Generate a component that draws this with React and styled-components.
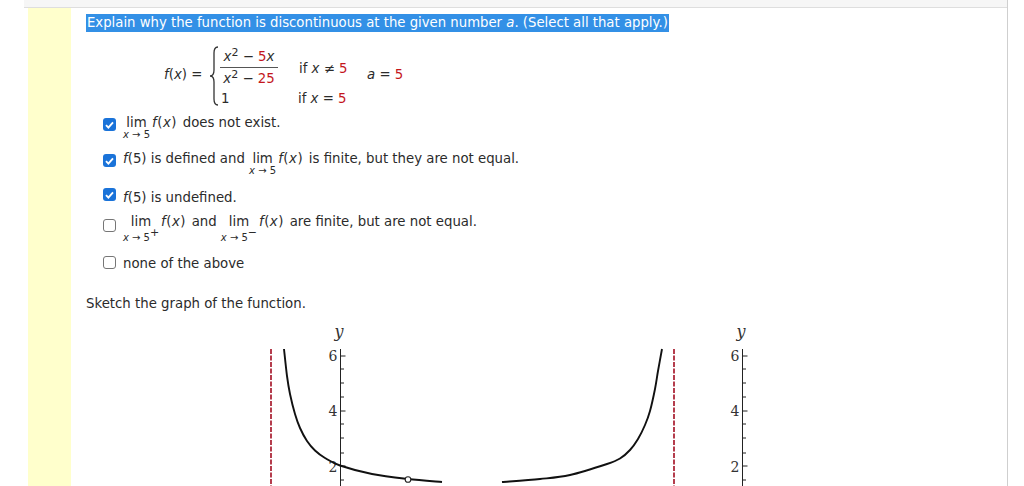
import React from 'react';
import styled, { createGlobalStyle } from 'styled-components';

const GlobalStyle = createGlobalStyle`
  html, body {
    margin: 0;
    height: 486px;
    overflow: hidden;
    background: #fff;
    font-family: "DejaVu Sans", Verdana, sans-serif;
    font-size: 13.3px;
    color: #2b2b2b;
  }
`;

const Page = styled.div`
  width: 983px;
  height: 486px;
  margin-left: 24px;
  display: flex;
  flex-direction: column;
  overflow: hidden;
  border-right: 1px solid #cfcfcf;
`;

const TopBar = styled.div`
  height: 7px;
  flex: none;
  background: #f6f6f6;
  border-bottom: 1px solid #dedede;
`;

const Body = styled.div`
  flex: 1;
  display: flex;
  padding-left: 4px;
  min-height: 0;
`;

const Sidebar = styled.div`
  width: 43px;
  flex: none;
  background: #ffffcc;
`;

const Content = styled.div`
  flex: 1;
  padding: 6px 0 0 15px;
  min-width: 0;
`;

const Highlight = styled.span`
  display: inline-block;
  height: 18px;
  line-height: 18px;
  padding: 0 1px;
  background: #3390e6;
  color: #fff;
  font-size: 13.26px;
  white-space: nowrap;
`;

const Em = styled.i`
  font-style: italic;
`;

const Red = styled.span`
  color: #c4161c;
`;

const MathRow = styled.div`
  display: flex;
  align-items: center;
  height: 60px;
  margin: 14px 0 0 78px;
`;

const Lhs = styled.span`
  width: 44px;
  flex: none;
  padding-bottom: 4px;
  white-space: nowrap;
`;

const Piecewise = styled.div`
  display: grid;
  grid-template-columns: 58px 89px;
  grid-template-rows: 45px 15px;
`;

const Fraction = styled.div`
  display: flex;
  flex-direction: column;
  align-items: center;
  justify-content: center;
`;

const FractionPart = styled.span`
  line-height: 22px;
  white-space: nowrap;
  &:first-child {
    line-height: 20px;
    border-bottom: 1px solid #555;
    width: 100%;
    text-align: center;
  }
`;

const Sup = styled.sup`
  font-size: 11px;
  line-height: 0;
  vertical-align: 5px;
`;

const Condition = styled.span`
  padding-left: ${(p) => p.$indent}px;
  align-self: center;
  white-space: nowrap;
`;

const CaseOne = styled.span`
  padding-left: 1px;
  align-self: center;
`;

const PointValue = styled.span`
  padding-bottom: 4px;
  white-space: nowrap;
`;

const Options = styled.div`
  margin: 9px 0 0 17px;
`;

const Option = styled.label`
  display: flex;
  align-items: flex-start;
  height: ${(p) => p.$h}px;
`;

const Box = styled.span`
  flex: none;
  width: 13px;
  height: 13px;
  margin-top: ${(p) => p.$top}px;
  margin-right: 7px;
  border-radius: 3px;
  box-sizing: border-box;
  border: ${(p) => (p.$checked ? 'none' : '1px solid #767676')};
  background: ${(p) => (p.$checked ? '#1a73d9' : '#fff')};
  display: flex;
  align-items: center;
  justify-content: center;
`;

const OptionText = styled.div`
  display: flex;
  align-items: flex-start;
  white-space: pre;
  line-height: 16px;
  padding-top: ${(p) => p.$top || 0}px;
`;

const Limit = styled.span`
  display: inline-flex;
  flex-direction: column;
  align-items: center;
  width: ${(p) => p.$w}px;
  line-height: 16px;
`;

const LimitSub = styled.span`
  font-size: 10px;
  line-height: 10px;
  margin-top: ${(p) => p.$gap}px;
  white-space: nowrap;
`;

const FxText = styled.span`
  letter-spacing: 0.5px;
  margin: 0 1.5px 0 2px;
`;

const Prompt = styled.p`
  margin: 0;
  padding-top: 12px;
  line-height: 16px;
`;

const Graphs = styled.svg`
  display: block;
  width: 520px;
  height: 138px;
  margin: 37px 0 0 174px;
  overflow: visible;
`;

const Label = styled.text`
  font-family: "DejaVu Serif", "Liberation Serif", serif;
  font-size: 14px;
  fill: #333;
`;

const AxisName = styled.text`
  font-family: "DejaVu Serif", "Liberation Serif", serif;
  font-style: italic;
  font-size: 16px;
  fill: #333;
`;

const Tick = () => (
  <svg width="9" height="8" viewBox="0 0 9 8" fill="none">
    <path d="M1 4.2 3.4 6.6 8 1.4" stroke="#fff" strokeWidth="1.9" />
  </svg>
);

const Check = ({ checked, top = 1 }) => (
  <Box $checked={checked} $top={top}>{checked && <Tick />}</Box>
);

const Lim = ({ w = 27, sub, gap = -1 }) => (
  <Limit $w={w}>
    lim
    <LimitSub $gap={gap}><Em>x</Em> → 5{sub}</LimitSub>
  </Limit>
);

const Fx = () => <FxText><Em>f</Em>(<Em>x</Em>)</FxText>;

const Brace = () => (
  <svg width="12" height="60" viewBox="0 0 12 60" fill="none">
    <path d="M10 1C7 1 6 3 6 7V24C6 28 5 30 2 30C5 30 6 32 6 36V53C6 57 7 59 10 59" stroke="#333" strokeWidth="1.3" />
  </svg>
);

// smooth line through measured points (catmull-rom to bezier)
const smooth = (pts) => {
  let d = `M${pts[0][0]} ${pts[0][1]}`;
  for (let i = 0; i < pts.length - 1; i++) {
    const p0 = pts[i - 1] || pts[i];
    const p1 = pts[i];
    const p2 = pts[i + 1];
    const p3 = pts[i + 2] || p2;
    const c1 = [p1[0] + (p2[0] - p0[0]) / 6, p1[1] + (p2[1] - p0[1]) / 6];
    const c2 = [p2[0] - (p3[0] - p1[0]) / 6, p2[1] - (p3[1] - p1[1]) / 6];
    d += `C${c1[0]} ${c1[1]} ${c2[0]} ${c2[1]} ${p2[0]} ${p2[1]}`;
  }
  return d;
};

// page coordinates measured from the picture, shifted to the svg's origin
const toLocal = (pts) => pts.map(([x, y]) => [x - 260, y - 348]);

const leftCurve = toLocal([[284, 348], [287, 375], [290, 393], [295, 413], [300, 427], [307, 440], [315, 449.5], [325, 457], [340, 464.5], [372, 473], [408, 478], [442, 481]]);
const rightCurve = toLocal([[502, 481], [540, 478], [570, 474], [607, 463], [620, 457.5], [630, 449], [638, 438], [645, 424], [650, 410], [655, 388], [658, 370], [662, 348]]);

const TICKS = [7, 20, 34, 48, 62, 75, 89, 104, 117, 131];

// one y axis with its ticks; every fourth tick is a labelled value
const Axis = ({ x }) => (
  <g>
    <AxisName x={x - 6} y={-12}>y</AxisName>
    <line x1={x} x2={x} y1="0" y2="138" stroke="#222" strokeWidth="1" />
    {TICKS.map((t, i) => (
      <line key={t} x1={x} x2={x + (i % 4 === 0 ? 5 : 3.5)} y1={t} y2={t} stroke="#222" strokeWidth="1" />
    ))}
    <Label x={x - 12} y={12}>6</Label>
    <Label x={x - 12} y={67}>4</Label>
    <Label x={x - 12} y={123}>2</Label>
  </g>
);

export default function App() {
  return (
    <>
      <GlobalStyle />
      <Page>
        <TopBar />
        <Body>
          <Sidebar />
          <Content>
            <Highlight>
              Explain why the function is discontinuous at the given number <Em>a</Em>. (Select all that apply.)
            </Highlight>

            <MathRow>
              <Lhs><Em>f</Em>(<Em>x</Em>) =</Lhs>
              <Brace />
              <Piecewise>
                <Fraction>
                  <FractionPart><Em>x</Em><Sup>2</Sup> − <Red>5</Red><Em>x</Em></FractionPart>
                  <FractionPart><Em>x</Em><Sup>2</Sup> − <Red>25</Red></FractionPart>
                </Fraction>
                <Condition $indent={21}>if <Em>x</Em> ≠ <Red>5</Red></Condition>
                <CaseOne>1</CaseOne>
                <Condition $indent={20}>if <Em>x</Em> = <Red>5</Red></Condition>
              </Piecewise>
              <PointValue><Em>a</Em> = <Red>5</Red></PointValue>
            </MathRow>

            <Options>
              <Option $h={36}>
                <Check checked top={3} />
                <OptionText><Lim /> <Fx /> does not exist.</OptionText>
              </Option>
              <Option $h={37}>
                <Check checked top={3} />
                <OptionText><span><Em>f</Em>(5) is defined and </span><Lim /> <Fx /> is finite, but they are not equal.</OptionText>
              </Option>
              <Option $h={26}>
                <Check checked top={0} />
                <OptionText $top={2}><span><Em>f</Em>(5) is undefined.</span></OptionText>
              </Option>
              <Option $h={42}>
                <Check top={5} />
                <OptionText><Lim w={36} gap={3} sub={<Sup>+</Sup>} /> <Fx /> and <Lim w={36} gap={3} sub={<Sup>−</Sup>} /> <Fx /> are finite, but are not equal.</OptionText>
              </Option>
              <Option $h={28}>
                <Check top={0} />
                <OptionText>none of the above</OptionText>
              </Option>
            </Options>

            <Prompt>Sketch the graph of the function.</Prompt>

            <Graphs viewBox="0 0 520 138">
              <Axis x={80.500} />
              <Axis x={482.500} />
              <line x1="11" x2="11" y1="0" y2="138" stroke="#a81c2e" strokeWidth="1.7" strokeDasharray="5 1.500" />
              <line x1="414" x2="414" y1="0" y2="138" stroke="#a81c2e" strokeWidth="1.7" strokeDasharray="5 1.500" />
              <path d={smooth(leftCurve)} fill="none" stroke="#111" strokeWidth="1.9" />
              <circle cx="148" cy="130.500" r="2.800" fill="#fff" stroke="#222" strokeWidth="1.1" />
              <path d={smooth(rightCurve)} fill="none" stroke="#111" strokeWidth="1.9" />
            </Graphs>
          </Content>
        </Body>
      </Page>
    </>
  );
}
